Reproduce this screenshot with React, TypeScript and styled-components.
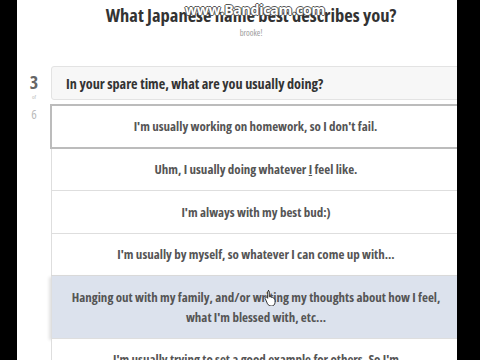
import React from 'react';
import styled, { createGlobalStyle } from 'styled-components';

const Global = createGlobalStyle`
  html, body {
    margin: 0;
    padding: 0;
    background: #000;
    height: 100%;
    overflow: hidden;
  }
  * { box-sizing: border-box; }
`

const Screen = styled.div`
  position: relative;
  width: 440px;
  height: 360px;
  margin-left: 17px;
  background: #fff;
  overflow: hidden;
  font-family: "Open Sans", "Noto Sans", sans-serif;
  font-stretch: 87.5%;
`

const Header = styled.div`
  display: flex;
  flex-direction: column;
  align-items: center;
  padding-top: 3px;
  padding-left: 28px;
  height: 66px;
`

const Title = styled.h1`
  margin: 0;
  font-size: 18.5px;
  line-height: 24px;
  font-weight: 700;
  color: #333;
`

const Subtitle = styled.div`
  font-size: 8.5px;
  line-height: 11px;
  color: #9a9a9a;
`

const Watermark = styled.div`
  position: absolute;
  top: 0;
  left: 168px;
  font-size: 14px;
  font-weight: 700;
  font-stretch: 100%;
  letter-spacing: -0.2px;
  color: #fff;
  text-shadow: 1px 0 0 #555, -1px 0 0 #555, 0 1px 0 #555, 0 -1px 0 #555;
`

const Quiz = styled.div`
  display: flex;
`

const Counter = styled.div`
  width: 34px;
  flex: none;
  display: flex;
  flex-direction: column;
  align-items: center;
  padding-top: 8px;
`

const Current = styled.div`
  font-size: 18px;
  line-height: 17px;
  font-weight: 700;
  color: #666;
`

const Of = styled.div`
  margin-top: 3px;
  font-size: 6px;
  line-height: 7px;
  color: #bbb;
`

const Total = styled.div`
  margin-top: 5px;
  font-size: 13px;
  line-height: 16px;
  color: #bbb;
`

const Main = styled.div`
  width: 410px;
  flex: none;
`

const Question = styled.div`
  height: 34px;
  display: flex;
  align-items: center;
  padding: 0 14px;
  background: #f7f7f7;
  border: 1px solid #e3e3e3;
  border-radius: 3px;
  font-size: 14.2px;
  font-weight: 700;
  color: #333;
`

const Answers = styled.div`
  margin-top: 4px;
  display: flex;
  flex-direction: column;
`

const Answer = styled.div<{ $focused?: boolean; $hover?: boolean }>`
  padding: ${p => (p.$focused ? '10.25px 14px' : '10.75px 14px')};
  text-align: center;
  font-size: 13px;
  line-height: 20px;
  font-weight: 700;
  color: #555;
  background: ${p => (p.$hover ? '#dce2ed' : '#fff')};
  border: ${p => (p.$focused ? '2px solid #bcbcbc' : '1px solid #dedede')};
  border-top-width: ${p => (p.$focused ? '2px' : '0')};
  margin-left: ${p => (p.$focused ? '-1px' : '0')};
  box-shadow: ${p => (p.$hover ? '-2px 1px 3px rgba(0,0,0,0.12)' : 'none')};
`

const Cursor = styled.svg`
  position: absolute;
  left: 247px;
  top: 289px;
`

const answers: React.ReactNode[] = [
  "I'm usually working on homework, so I don't fail.",
  <>Uhm, I usually doing whatever <u>I</u> feel like.</>,
  "I'm always with my best bud:)",
  "I'm usually by myself, so whatever I can come up with...",
  "Hanging out with my family, and/or writing my thoughts about how I feel, what I'm blessed with, etc...",
  <>I'm usually trying to set a good example for others. So I'm<br />usually helping people out.</>,
]

export default function App() {
  return (
    <>
      <Global />
      <Screen>
        <Header>
          <Title>What Japanese name best describes you?</Title>
          <Subtitle>brooke!</Subtitle>
        </Header>
        <Quiz>
          <Counter>
            <Current>3</Current>
            <Of>of</Of>
            <Total>6</Total>
          </Counter>
          <Main>
            <Question>In your spare time, what are you usually doing?</Question>
            <Answers>
              {answers.map((a, i) => (
                <Answer key={i} $focused={i === 0} $hover={i === 4}>
                  {a}
                </Answer>
              ))}
            </Answers>
          </Main>
        </Quiz>
        <Watermark>www.Bandicam.com</Watermark>
        <Cursor width="14" height="17" viewBox="0 0 14 17">
          <path
            d="M4 1.5c.8 0 1.3.6 1.3 1.3v5l.4-.1c.7-.2 1.4.1 1.6.7.6-.3 1.4 0 1.7.6.6-.2 1.4.1 1.6.8.3 1 .6 2.5.4 4-.3 2-1.5 3.2-3.7 3.2-1.8 0-2.8-.8-3.8-2.2L1.3 9.8c-.4-.6-.2-1.3.4-1.6.5-.3 1.1-.1 1.5.4l.5.7V2.8c0-.7.5-1.3 1.3-1.3z"
            fill="#fff"
            stroke="#222"
            strokeWidth="0.9"
          />
        </Cursor>
      </Screen>
    </>
  );
}
